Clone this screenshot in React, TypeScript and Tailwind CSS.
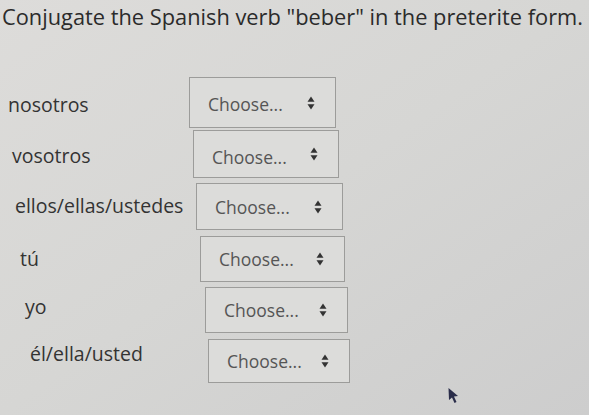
import React from "react";

const rows = [
  { label: "nosotros", row: "ml-[8px] mt-[45px]", w: "w-[181px]", lp: "pt-[13px]", box: "w-[147px] h-[51px]", tp: "pt-[4px]" },
  { label: "vosotros", row: "ml-[12px] mt-[2px]", w: "w-[181px]", lp: "pt-[11px]", box: "w-[146px] h-[48px]", tp: "pt-[6px]" },
  { label: "ellos/ellas/ustedes", row: "ml-[15px] mt-[5px]", w: "w-[181px]", lp: "pt-[8px]", box: "w-[147px] h-[47px]", tp: "pt-[2px]" },
  { label: "tú", row: "ml-[20px] mt-[6px]", w: "w-[180px]", lp: "pt-[8px]", box: "w-[145px] h-[46px]", tp: "pt-[0px]" },
  { label: "yo", row: "ml-[25px] mt-[5px]", w: "w-[180px]", lp: "pt-[5px]", box: "w-[143px] h-[46px]", tp: "pt-[0px]" },
  { label: "él/ella/usted", row: "ml-[30px] mt-[6px]", w: "w-[178px]", lp: "pt-[0px]", box: "w-[142px] h-[44px]", tp: "pt-[0px]" },
];

function Arrows() {
  return (
    <svg width="8" height="14" viewBox="0 0 8 14" className="shrink-0">
      <path d="M4 0.5 L7.5 5.8 L0.5 5.8 Z" fill="#333" />
      <path d="M4 13.5 L7.5 8.2 L0.5 8.2 Z" fill="#333" />
    </svg>
  );
}

export default function App() {
  return (
    <div
      className="relative w-[589px] h-[415px] overflow-hidden bg-gradient-to-br from-[#dddcda] via-[#d6d6d4] to-[#cdcdcd] flex flex-col"
      style={{ fontFamily: '"Open Sans", "Noto Sans", sans-serif' }}
    >
      <h1 className="text-[21.8px] leading-[30px] font-medium text-[#2b2b2b] pl-[2px] pt-[2px] whitespace-nowrap">
        Conjugate the Spanish verb "beber" in the preterite form.
      </h1>
      <div className="flex flex-col">
        {rows.map((r) => (
          <div key={r.label} className={`flex items-start ${r.row}`}>
            <div className={`${r.w} ${r.lp} shrink-0 text-[19.5px] leading-[30px] text-[#333]`}>{r.label}</div>
            <div className={`${r.box} shrink-0 border-[1.5px] border-[#9c9c9a] bg-[#dcdcda] flex items-center pl-[18px] pr-[20px]`}>
              <span className={`${r.tp} text-[17.5px] text-[#555] flex-1`}>Choose...</span>
              <Arrows />
            </div>
          </div>
        ))}
      </div>
      <svg className="absolute left-[447px] top-[387px]" width="14" height="18" viewBox="0 0 14 18">
        <path d="M1.5 1 L11 9 L7 9.5 L9.5 15 L7.5 16 L5 10.5 L2 13 Z" fill="#2a2d4a" />
      </svg>
    </div>
  );
}
